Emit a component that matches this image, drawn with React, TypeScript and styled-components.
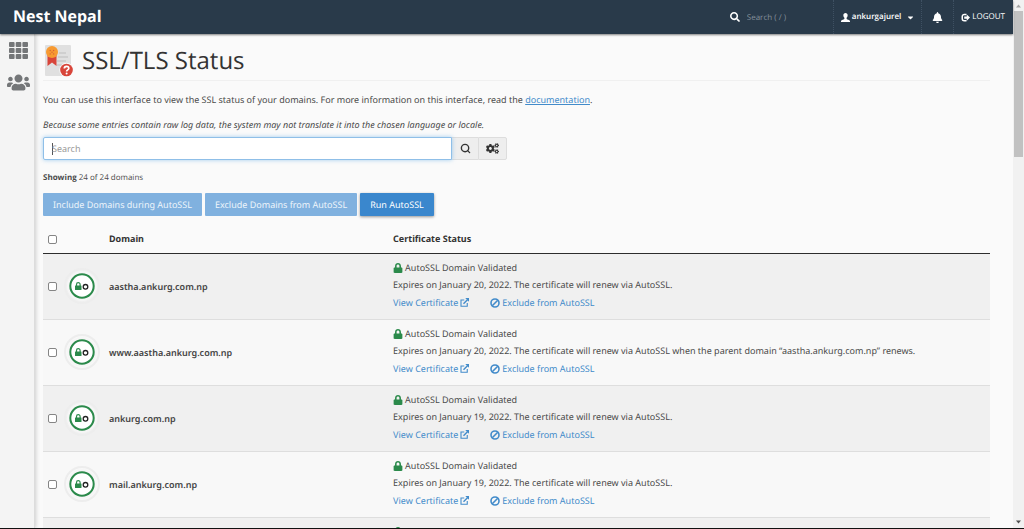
import React from "react";
import styled, { createGlobalStyle } from "styled-components";
import { FaSearch, FaBell, FaUsers, FaCogs, FaLock, FaCaretDown } from "react-icons/fa";
import { Search } from "lucide-react";

const GlobalStyle = createGlobalStyle`
  * { box-sizing: border-box; }
  body {
    margin: 0;
    background: #fafafa;
    color: #4a4a4a;
    font-family: "Noto Sans", "Open Sans", sans-serif;
    font-size: 9px;
    line-height: 16px;
    text-rendering: geometricPrecision;
  }
  button, input { text-rendering: inherit; }
  svg { display: block; flex: none; }
`;

const Screen = styled.div`
  display: flex;
  height: 100vh;
  overflow: hidden;
  border-bottom: 1px solid #111;
`;

const Page = styled.div`
  flex: 1;
  min-width: 0;
  display: flex;
  flex-direction: column;
`;

const TopBar = styled.header`
  position: relative;
  z-index: 2;
  flex: none;
  display: flex;
  align-items: stretch;
  height: 34px;
  padding: 0 8px 0 13px;
  background: #293a4a;
  color: #fff;
  font-family: "Open Sans", "Noto Sans", sans-serif;
  box-shadow: 0 1px 2px rgba(0, 0, 0, 0.5);
`;

const Brand = styled.div`
  margin-right: auto;
  font-size: 16px;
  font-weight: 700;
  line-height: 33px;
`;

const QuickSearch = styled.label`
  display: flex;
  align-items: center;
  gap: 7px;
`;

const QuickInput = styled.input`
  width: 86px;
  height: 20px;
  padding: 0;
  border: 0;
  background: none;
  color: #fff;
  font: inherit;
  font-size: 8px;
  &::placeholder { color: #84909b; opacity: 1; }
`;

const BarButton = styled.button<{ $padLeft: number; $padRight: number; $strong?: boolean }>`
  display: flex;
  align-items: center;
  gap: 2px;
  padding: 0 ${(p) => p.$padRight}px 0 ${(p) => p.$padLeft}px;
  border: 0;
  border-left: 1px dotted #3f5163;
  background: none;
  color: #fff;
  font: inherit;
  font-size: 8px;
  font-weight: ${(p) => (p.$strong ? 600 : 400)};
`;

const Caret = styled.span`
  margin-left: 3px;
`;

const Body = styled.div`
  flex: 1;
  min-height: 0;
  display: flex;
`;

const SideNav = styled.nav`
  flex: none;
  display: flex;
  flex-direction: column;
  align-items: center;
  gap: 12px;
  width: 35px;
  padding: 8px 0 0 2px;
  border-right: 1px solid #dcdcdc;
  background: #f4f4f4;
  box-shadow: 1px 0 4px rgba(0, 0, 0, 0.18);
`;

const NavLink = styled.a`
  display: flex;
  justify-content: center;
  color: #747678;
`;

const Main = styled.main`
  flex: 1;
  min-width: 0;
  overflow-y: auto;
  scrollbar-width: none;
  padding: 7px 23px 0 8px;
`;

const TitleRow = styled.div`
  display: flex;
  align-items: center;
  gap: 8px;
  height: 40px;
  padding-left: 1px;
  border-bottom: 1px solid #f0f0f0;
`;

const Title = styled.h1`
  margin: 0;
  color: #333;
  font-family: "Open Sans", "Noto Sans", sans-serif;
  font-size: 24px;
  font-weight: 400;
  line-height: 38px;
`;

const Intro = styled.p`
  margin: 11px 0 0;
`;

const Note = styled.p`
  margin: 9px 0 0;
  font-style: italic;
`;

const DocLink = styled.a`
  color: #428bca;
  text-decoration: underline;
`;

const SearchGroup = styled.div`
  display: flex;
  width: 49%;
  height: 23px;
  margin-top: 4px;
`;

const SearchInput = styled.input`
  position: relative;
  flex: 1;
  min-width: 0;
  padding: 0 8px;
  border: 1px solid #8fbfe8;
  border-radius: 2px 0 0 2px;
  outline: none;
  background: #fff;
  box-shadow: 0 0 4px rgba(102, 175, 233, 0.6);
  color: #444;
  font: inherit;
  &::placeholder { color: #999; opacity: 1; }
  &:focus:placeholder-shown {
    caret-color: transparent;
    background: linear-gradient(#555, #555) 8px center / 1px 12px no-repeat #fff;
  }
`;

const AddonButton = styled.button<{ $last?: boolean }>`
  display: flex;
  align-items: center;
  justify-content: center;
  width: ${(p) => (p.$last ? 29 : 26)}px;
  padding: 0;
  border: 1px solid #ddd;
  border-left-width: ${(p) => (p.$last ? 1 : 0)}px;
  border-right-width: ${(p) => (p.$last ? 1 : 0)}px;
  border-radius: ${(p) => (p.$last ? "0 2px 2px 0" : "0")};
  background: #eee;
  color: #333;
`;

const Showing = styled.p`
  margin: 10px 0 0;
  font-family: "Open Sans", "Noto Sans", sans-serif;
  font-size: 8px;
`;

const Actions = styled.div`
  display: flex;
  gap: 3px;
  margin-top: 7px;
`;

const ActionButton = styled.button<{ $active?: boolean }>`
  height: 23px;
  padding: 0 10px;
  border: 0;
  border-radius: 1px;
  background: ${(p) => (p.$active ? "#3a87cd" : "#80b1df")};
  box-shadow: ${(p) => (p.$active ? "0 1px 3px rgba(0, 0, 0, 0.4)" : "none")};
  color: ${(p) => (p.$active ? "#fff" : "#eef5fb")};
  font: inherit;
`;

const DomainTable = styled.table`
  width: 100%;
  margin-top: 10px;
  border-collapse: collapse;
  table-layout: fixed;
`;

const HeadCell = styled.th<{ $width?: string }>`
  width: ${(p) => p.$width ?? "auto"};
  height: 27px;
  padding: 0;
  border-bottom: 1px solid #2d2d2d;
  color: #333;
  font-weight: 700;
  text-align: left;
`;

const Row = styled.tr`
  border-bottom: 1px solid #dedede;
  background: #f8f8f8;
  &:nth-child(odd) { background: #f0f0f0; }
`;

const Cell = styled.td`
  height: 66px;
  padding: 0;
  vertical-align: middle;
`;

const DomainCell = styled(Cell)`
  padding-top: 2px;
  color: #444;
  font-weight: 600;
`;

const StatusCell = styled(Cell)`
  padding-bottom: 1px;
`;

const Tick = styled.input`
  display: block;
  appearance: none;
  width: 9px;
  height: 9px;
  margin: 0 0 0 5px;
  border: 1px solid #858585;
  border-radius: 2px;
  background: #fff;
`;

const StatusLine = styled.div`
  display: flex;
  align-items: center;
  gap: 2px;
  height: 17px;
`;

const StatusActions = styled(StatusLine)`
  gap: 21px;
  height: 19px;
`;

const StatusLink = styled.a`
  display: flex;
  align-items: center;
  gap: 2px;
  color: #428bca;
  text-decoration: none;
`;

const ScrollTrack = styled.div`
  flex: none;
  display: flex;
  flex-direction: column;
  align-items: center;
  width: 11px;
  padding: 4px 0;
  background: #f1f1f1;
`;

const ScrollThumb = styled.div`
  width: 9px;
  height: 28%;
  margin: 3px 0 auto;
  background: #c1c1c1;
`;

const GridIcon = () => (
  <svg width="19" height="17" viewBox="0 0 19 17" fill="currentColor">
    {[0, 6, 12].map((y) =>
      [0, 6.7, 13.4].map((x) => <rect key={`${x}-${y}`} x={x} y={y} width="5.6" height="4.9" rx="0.9" />)
    )}
  </svg>
);

const PersonIcon = () => (
  <svg width="9" height="9" viewBox="0 0 18 18" fill="currentColor">
    <path d="M9 0c2.600 0 4.300 1.900 4.300 4.500 0 2-.8 4-2.100 5.100v1.900c0 .7 1 1.100 3.200 2C16.800 14.400 18 15 18 16.500V18H0v-1.500c0-1.500 1.200-2.100 3.600-3 2.200-.9 3.200-1.300 3.200-2V9.600C5.500 8.500 4.700 6.500 4.700 4.500 4.700 1.900 6.400 0 9 0z" />
  </svg>
);

const LogoutIcon = () => (
  <svg width="9" height="9" viewBox="0 0 18 18" fill="none">
    <path d="M11 3H6.500A4 4 0 0 0 2.500 7v4.500a4 4 0 0 0 4 4H11" stroke="currentColor" strokeWidth="3" />
    <path d="M6.500 7h5V3L18 9.200l-6.500 6.200V11.500h-5z" fill="currentColor" />
  </svg>
);

const ExternalIcon = () => (
  <svg width="9" height="9" viewBox="0 0 18 18" fill="none" stroke="currentColor" strokeWidth="2.200">
    <path d="M8.500 4H2v12.500h12.500V10" />
    <path d="M7 11.500L15 3.500" strokeWidth="2.800" />
    <path d="M10.500 0H18v7.500z" fill="currentColor" stroke="none" />
  </svg>
);

const BanIcon = () => (
  <svg width="10" height="10" viewBox="0 0 20 20" fill="none" stroke="currentColor" strokeWidth="3.200">
    <circle cx="10" cy="10" r="8" />
    <path d="M4.500 15.500l11-11" />
  </svg>
);

const CertificateIcon = () => (
  <svg width="30" height="34" viewBox="0 0 30 34">
    <rect x="1" y="1" width="26" height="31" rx="1" fill="#e0e0e0" />
    <path d="M15 9h7M14 13h10M13 17h9M13 21h6" stroke="#bdbdbd" strokeWidth="1.200" />
    <path d="M3.500 11h9v11L8 18.500 3.500 22z" fill="#d8453a" />
    <circle cx="8" cy="8" r="6" fill="#f79a31" />
    <g fill="#d8603a">
      <circle cx="6.200" cy="6.500" r="0.700" />
      <circle cx="9.600" cy="6.500" r="0.700" />
      <circle cx="8" cy="8.200" r="0.700" />
      <circle cx="6.200" cy="9.900" r="0.700" />
      <circle cx="9.600" cy="9.900" r="0.700" />
    </g>
    <circle cx="22.500" cy="26" r="7.200" fill="#fafafa" />
    <circle cx="22.500" cy="26" r="6.300" fill="#d8453a" />
    <path d="M20.300 24.600c0-3 4.500-3 4.500-.3 0 1.600-2.200 1.500-2.200 3.100" fill="none" stroke="#fff" strokeWidth="1.700" />
    <circle cx="22.600" cy="29.400" r="1" fill="#fff" />
  </svg>
);

const BadgeIcon = () => (
  <svg width="38" height="38" viewBox="0 0 38 38">
    <circle cx="19" cy="19" r="17" fill="none" stroke="#ededed" strokeWidth="2" />
    <circle cx="19" cy="19" r="15" fill="#f6f6f6" />
    <circle cx="19" cy="19" r="11.700" fill="#fff" stroke="#2b8a4b" strokeWidth="2" />
    <rect x="12" y="18.500" width="6.500" height="4.500" rx="0.500" fill="#2b8a4b" />
    <path d="M13.500 19v-1.600a1.800 1.800 0 0 1 3.600 0V19" fill="none" stroke="#2b8a4b" strokeWidth="1.200" />
    <circle cx="22.500" cy="19.800" r="2.300" fill="none" stroke="#222" strokeWidth="1.300" />
  </svg>
);

const ScrollArrow = ({ down }: { down?: boolean }) => (
  <svg width="5" height="4" viewBox="0 0 5 4">
    <path d={down ? "M0 0.500h5L2.500 3.500z" : "M0 3.500h5L2.500 0.500z"} fill={down ? "#505050" : "#a3a3a3"} />
  </svg>
);

const domains = [
  { name: "aastha.ankurg.com.np", date: "January 20, 2022" },
  { name: "www.aastha.ankurg.com.np", date: "January 20, 2022", parent: "aastha.ankurg.com.np" },
  { name: "ankurg.com.np", date: "January 19, 2022" },
  { name: "mail.ankurg.com.np", date: "January 19, 2022" },
  { name: "www.ankurg.com.np", date: "January 19, 2022" },
];

export default function App() {
  return (
    <Screen>
      <GlobalStyle />
      <Page>
        <TopBar>
          <Brand>Nest Nepal</Brand>
          <QuickSearch>
            <FaSearch size={10} />
            <QuickInput type="text" placeholder="Search ( / )" aria-label="Quick search" />
          </QuickSearch>
          <BarButton $padLeft={7} $padRight={6} $strong>
            <PersonIcon />
            ankurgajurel
            <Caret>
              <FaCaretDown size={9} />
            </Caret>
          </BarButton>
          <BarButton $padLeft={10} $padRight={10} aria-label="Notifications">
            <FaBell size={11} />
          </BarButton>
          <BarButton $padLeft={7} $padRight={0}>
            <LogoutIcon />
            LOGOUT
          </BarButton>
        </TopBar>
        <Body>
          <SideNav>
            <NavLink href="#tools" aria-label="Tools">
              <GridIcon />
            </NavLink>
            <NavLink href="#users" aria-label="User Manager">
              <FaUsers size={23} />
            </NavLink>
          </SideNav>
          <Main>
            <TitleRow>
              <CertificateIcon />
              <Title>SSL/TLS Status</Title>
            </TitleRow>
            <Intro>
              You can use this interface to view the SSL status of your domains. For more information on this
              interface, read the <DocLink href="#documentation">documentation</DocLink>.
            </Intro>
            <Note>
              Because some entries contain raw log data, the system may not translate it into the chosen language
              or locale.
            </Note>
            <SearchGroup>
              <SearchInput type="text" placeholder="Search" aria-label="Search domains" autoFocus />
              <AddonButton aria-label="Search">
                <Search size={11} strokeWidth={3} />
              </AddonButton>
              <AddonButton $last aria-label="Settings">
                <FaCogs size={13} />
              </AddonButton>
            </SearchGroup>
            <Showing>
              <strong>Showing</strong> 24 of 24 domains
            </Showing>
            <Actions>
              <ActionButton>Include Domains during AutoSSL</ActionButton>
              <ActionButton>Exclude Domains from AutoSSL</ActionButton>
              <ActionButton $active>Run AutoSSL</ActionButton>
            </Actions>
            <DomainTable>
              <thead>
                <tr>
                  <HeadCell $width="20px">
                    <Tick type="checkbox" aria-label="Select all domains" />
                  </HeadCell>
                  <HeadCell $width="46px" />
                  <HeadCell $width="30%">Domain</HeadCell>
                  <HeadCell>Certificate Status</HeadCell>
                </tr>
              </thead>
              <tbody>
                {domains.map((d) => (
                  <Row key={d.name}>
                    <Cell>
                      <Tick type="checkbox" aria-label={`Select ${d.name}`} />
                    </Cell>
                    <Cell>
                      <BadgeIcon />
                    </Cell>
                    <DomainCell>{d.name}</DomainCell>
                    <StatusCell>
                      <StatusLine>
                        <FaLock size={10} color="#2b8a4b" />
                        AutoSSL Domain Validated
                      </StatusLine>
                      <StatusLine>
                        {`Expires on ${d.date}. The certificate will renew via AutoSSL${
                          d.parent ? ` when the parent domain “${d.parent}” renews` : ""
                        }.`}
                      </StatusLine>
                      <StatusActions>
                        <StatusLink href="#view">
                          View Certificate
                          <ExternalIcon />
                        </StatusLink>
                        <StatusLink href="#exclude">
                          <BanIcon />
                          Exclude from AutoSSL
                        </StatusLink>
                      </StatusActions>
                    </StatusCell>
                  </Row>
                ))}
              </tbody>
            </DomainTable>
          </Main>
        </Body>
      </Page>
      <ScrollTrack>
        <ScrollArrow />
        <ScrollThumb />
        <ScrollArrow down />
      </ScrollTrack>
    </Screen>
  );
}
